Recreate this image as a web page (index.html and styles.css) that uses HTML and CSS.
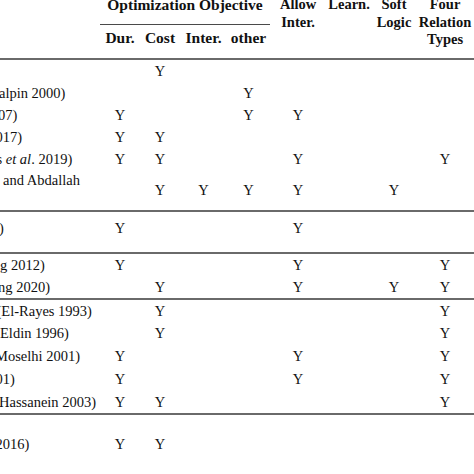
FILE: index.html
```html
<!DOCTYPE html>
<html>
<head>
<meta charset="utf-8">
<link rel="stylesheet" href="styles.css">
</head>
<body>
<div class="frame">
<table class="tbl">
<colgroup>
<col class="c-ref"><col class="c-dur"><col class="c-cost"><col class="c-inter"><col class="c-other"><col class="c-allow"><col class="c-learn"><col class="c-soft"><col class="c-four">
</colgroup>
<thead>
<tr class="h1">
<th class="ref" rowspan="2"></th>
<th class="group" colspan="4">Optimization Objective</th>
<th class="tall" rowspan="2">Allow<br>Inter.</th>
<th class="tall" rowspan="2">Learn.</th>
<th class="tall" rowspan="2">Soft<br>Logic</th>
<th class="tall" rowspan="2">Four<br>Relation<br>Types</th>
</tr>
<tr class="h2"><th>Dur.</th><th>Cost</th><th>Inter.</th><th>other</th></tr>
</thead>
<tbody>
<tr class="r22"><td class="ref"></td><td></td><td>Y</td><td></td><td></td><td></td><td></td><td></td><td></td></tr>
<tr class="r22"><td class="ref"><span class="s1">alpin 2000)</span></td><td></td><td></td><td></td><td>Y</td><td></td><td></td><td></td><td></td></tr>
<tr class="r22"><td class="ref"><span class="s2">07)</span></td><td>Y</td><td></td><td></td><td>Y</td><td>Y</td><td></td><td></td><td></td></tr>
<tr class="r22"><td class="ref"><span class="s4">017)</span></td><td>Y</td><td>Y</td><td></td><td></td><td></td><td></td><td></td><td></td></tr>
<tr class="r22"><td class="ref"><span class="s3">s <i>et al</i>. 2019)</span></td><td>Y</td><td>Y</td><td></td><td></td><td>Y</td><td></td><td></td><td>Y</td></tr>
<tr class="two"><td class="ref"><span class="p3">and Abdallah</span></td><td></td><td>Y</td><td>Y</td><td>Y</td><td>Y</td><td></td><td>Y</td><td></td></tr>
<tr class="sep solo"><td class="ref"><span class="s1">)</span></td><td>Y</td><td></td><td></td><td></td><td>Y</td><td></td><td></td><td></td></tr>
<tr class="sep r22"><td class="ref"><span>g 2012)</span></td><td>Y</td><td></td><td></td><td></td><td>Y</td><td></td><td></td><td>Y</td></tr>
<tr class="r22"><td class="ref"><span class="s2">ng 2020)</span></td><td></td><td>Y</td><td></td><td></td><td>Y</td><td></td><td>Y</td><td>Y</td></tr>
<tr class="sep r23"><td class="ref"><span class="s3">(El-Rayes 1993)</span></td><td></td><td>Y</td><td></td><td></td><td></td><td></td><td></td><td>Y</td></tr>
<tr class="r23"><td class="ref"><span>Eldin 1996)</span></td><td></td><td>Y</td><td></td><td></td><td></td><td></td><td></td><td>Y</td></tr>
<tr class="r23"><td class="ref"><span class="s5">Moselhi 2001)</span></td><td>Y</td><td></td><td></td><td></td><td>Y</td><td></td><td></td><td>Y</td></tr>
<tr class="r23"><td class="ref"><span class="s4">01)</span></td><td>Y</td><td></td><td></td><td></td><td>Y</td><td></td><td></td><td>Y</td></tr>
<tr class="r23"><td class="ref"><span class="s1">Hassanein 2003)</span></td><td>Y</td><td>Y</td><td></td><td></td><td></td><td></td><td></td><td>Y</td></tr>
<tr class="sep last"><td class="ref"><span class="s4">2016)</span></td><td>Y</td><td>Y</td><td></td><td></td><td></td><td></td><td></td><td></td></tr>
</tbody>
</table>
</div>
</body>
</html>
```

FILE: styles.css
```css
html, body {
  margin: 0;
  padding: 0;
  background: #ffffff;
}
.frame {
  width: 474px;
  height: 474px;
  overflow: hidden;
}
.tbl {
  margin-top: -4px;
  width: 474px;
  table-layout: fixed;
  border-collapse: separate;
  border-spacing: 0;
  font-family: "Liberation Serif", "Times New Roman", serif;
  font-size: 14.5px;
  color: #111111;
}
.c-ref { width: 100px; }
.c-dur { width: 40px; }
.c-cost { width: 40px; }
.c-inter { width: 47px; }
.c-other { width: 43px; }
.c-allow { width: 56px; }
.c-learn { width: 46px; }
.c-soft { width: 44px; }
.c-four { width: 58px; }

th {
  font-weight: bold;
  line-height: 17.5px;
  padding: 0;
  text-align: center;
  vertical-align: top;
  white-space: nowrap;
}
.h1 .group {
  font-size: 15.5px;
  padding: 0 0 10px;
  border-bottom: 1.5px solid #4a4a4a;
}
.h2 th {
  font-size: 15.5px;
  padding: 4.5px 0 11px;
  border-bottom: 2px solid #6a6a6a;
}
th.ref, th.tall {
  border-bottom: 2px solid #6a6a6a;
}
td {
  padding: 0;
  text-align: center;
  vertical-align: middle;
  white-space: nowrap;
}
td.ref {
  text-align: left;
  overflow: hidden;
}
td.ref span {
  display: inline-block;
}
.r22 td { line-height: 22px; }
.r23 td { line-height: 22.75px; }
.two td { height: 40px; line-height: 20px; }
.two td.ref { vertical-align: top; }
.solo td { line-height: 22px; padding: 5px 0 13px; }
.last td { line-height: 23px; padding: 18px 0 10px; }
.sep td { border-top: 2px solid #6a6a6a; }

.s1 { margin-left: -1px; }
.s2 { margin-left: -2px; }
.s3 { margin-left: -3.5px; }
.s4 { margin-left: -4.5px; }
.s5 { margin-left: -5px; }
.p3 { margin-left: 3px; }
```
